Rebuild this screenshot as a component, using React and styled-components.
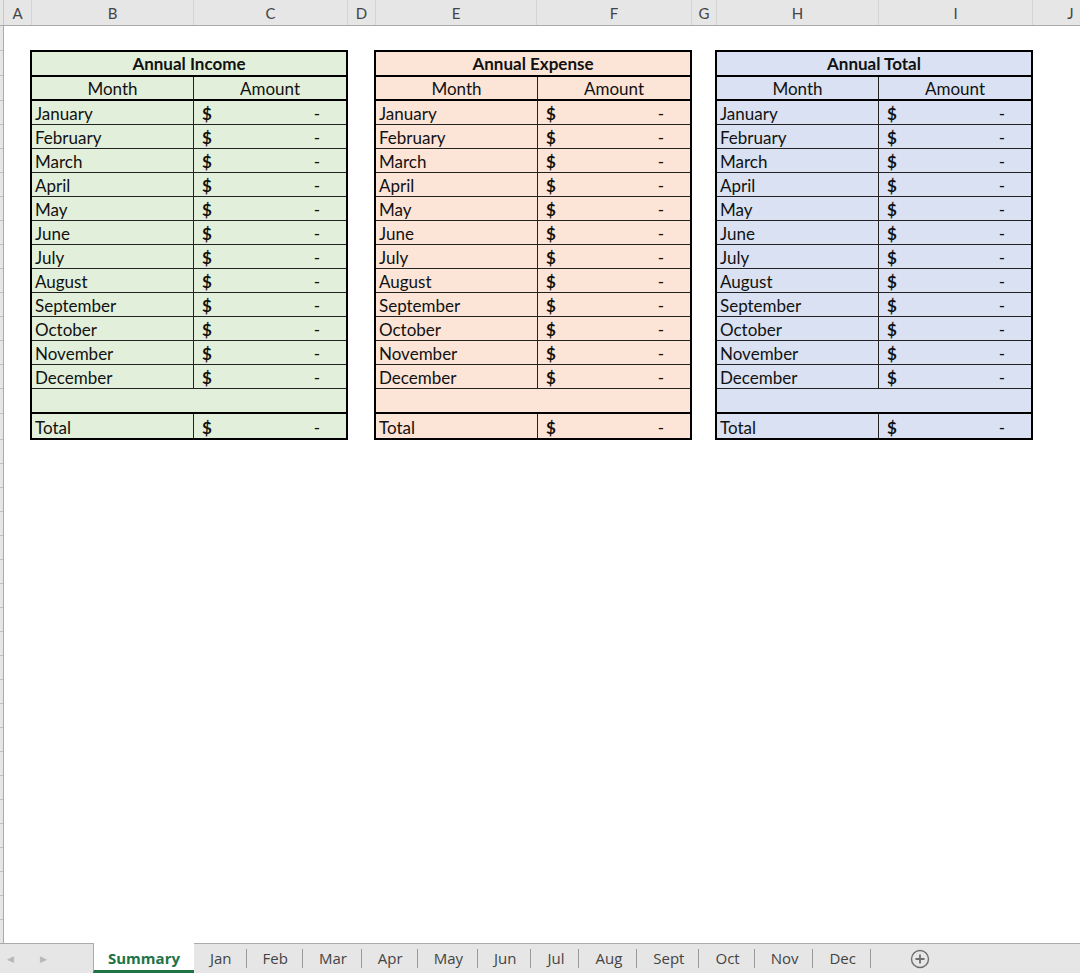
import React from "react";
import styled, { createGlobalStyle } from "styled-components";

const GlobalStyle = createGlobalStyle`
  html, body {
    margin: 0;
    padding: 0;
    background: #ffffff;
  }
  * {
    box-sizing: border-box;
  }
`;

const months = [
  "January",
  "February",
  "March",
  "April",
  "May",
  "June",
  "July",
  "August",
  "September",
  "October",
  "November",
  "December",
];

// column header letters with their widths in px
const columns = [
  { id: "A", w: 28 },
  { id: "B", w: 162 },
  { id: "C", w: 154 },
  { id: "D", w: 28 },
  { id: "E", w: 161 },
  { id: "F", w: 155 },
  { id: "G", w: 25 },
  { id: "H", w: 162 },
  { id: "I", w: 154 },
  { id: "J", w: 76 },
];

// sheet row heights, drawn in the narrow row header on the left
const rowHeights = [25, 25, 25, ...Array(12).fill(24), 25, 26, ...Array(21).fill(24)];

const sheets = ["Jan", "Feb", "Mar", "Apr", "May", "Jun", "Jul", "Aug", "Sept", "Oct", "Nov", "Dec"];

const tables = [
  { title: "Annual Income", bg: "#e2efda" },
  { title: "Annual Expense", bg: "#fce4d6" },
  { title: "Annual Total", bg: "#d9e1f2" },
];

const Window = styled.div`
  width: 1080px;
  height: 973px;
  display: flex;
  flex-direction: column;
  overflow: hidden;
  background: #fff;
`;

const ColumnBar = styled.div`
  height: 26px;
  display: flex;
  background: #e6e6e6;
  border-bottom: 1px solid #ababab;
  flex-shrink: 0;
  overflow: hidden;
`;

const Corner = styled.div`
  width: 4px;
  flex-shrink: 0;
  border-right: 1px solid #c8c8c8;
`;

const ColumnCell = styled.div`
  width: ${(p) => p.w}px;
  flex-shrink: 0;
  display: flex;
  align-items: center;
  justify-content: center;
  border-right: 1px solid #d4d4d4;
  font-family: Lato, "Liberation Sans", sans-serif;
  font-size: 15px;
  color: #444;
`;

const Body = styled.div`
  flex: 1;
  display: flex;
  min-height: 0;
`;

const RowHeader = styled.div`
  width: 4px;
  flex-shrink: 0;
  background: #e6e6e6;
  border-right: 1px solid #ababab;
  display: flex;
  flex-direction: column;
  overflow: hidden;
`;

const RowCell = styled.div`
  height: ${(p) => p.h}px;
  flex-shrink: 0;
  border-bottom: 1px solid #c2c2c2;
`;

const Sheet = styled.div`
  flex: 1;
  display: flex;
  align-items: flex-start;
  padding: 24px 0 0 26px;
  gap: 23px;
`;

const Table = styled.div`
  width: 318px;
  display: grid;
  grid-template-columns: 162px 1fr;
  background: ${(p) => p.bg};
  border: 2px solid #000;
  font-family: Lato, "Liberation Sans", sans-serif;
  font-size: 17px;
  color: #111;
  &:nth-child(2) {
    margin-left: 3px;
  }
`;

const Title = styled.div`
  grid-column: 1 / span 2;
  height: 25px;
  border-bottom: 2px solid #000;
  display: flex;
  align-items: center;
  justify-content: center;
  font-weight: 700;
  font-size: 17px;
`;

const HeadCell = styled.div`
  height: 24px;
  border-bottom: 2px solid #000;
  border-right: ${(p) => (p.first ? "1px solid #222" : "none")};
  display: flex;
  align-items: center;
  justify-content: center;
  padding-top: 1px;
`;

const Cell = styled.div`
  height: ${(p) => p.h || 24}px;
  border-bottom: ${(p) => (p.last ? "none" : "1px solid #222")};
  border-right: ${(p) => (p.first ? "1px solid #222" : "none")};
  display: flex;
  align-items: center;
  padding: 2px 0 0 3px;
`;

const Blank = styled.div`
  grid-column: 1 / span 2;
  height: 25px;
  border-bottom: 2px solid #000;
`;

const Amount = styled(Cell)`
  justify-content: space-between;
  padding: 2px 26px 0 8px;
`;

const Dollar = styled.span`
  font-weight: 700;
`;

const TabBar = styled.div`
  height: 30px;
  flex-shrink: 0;
  display: flex;
  align-items: stretch;
  background: #e6e6e6;
  border-top: 1px solid #ababab;
  font-family: "Open Sans", "Liberation Sans", sans-serif;
  font-size: 15px;
  color: #444;
`;

const Nav = styled.div`
  width: 93px;
  display: flex;
  align-items: center;
  gap: 26px;
  padding-left: 7px;
  color: #b8b8b8;
  font-size: 9px;
`;

const Tab = styled.div`
  display: flex;
  align-items: center;
  padding: ${(p) => (p.active ? "2px 14px 0 14px" : "2px 15px 0 16px")};
  position: relative;
  background: ${(p) => (p.active ? "#fff" : "transparent")};
  color: ${(p) => (p.active ? "#217346" : "#444")};
  font-weight: ${(p) => (p.active ? 700 : 400)};
  border-left: ${(p) => (p.active ? "1px solid #ababab" : "none")};
  border-bottom: ${(p) => (p.active ? "3px solid #217346" : "3px solid transparent")};
  margin-top: ${(p) => (p.active ? "-1px" : "0")};
  &::after {
    content: "";
    position: absolute;
    right: 0;
    top: 5px;
    bottom: 2px;
    width: 1px;
    background: ${(p) => (p.active ? "transparent" : "#9a9a9a")};
  }
`;

const AddSheet = styled.div`
  display: flex;
  align-items: center;
  padding-left: 39px;
  color: #777;
`;

const PlusIcon = () => (
  <svg width="20" height="20" viewBox="0 0 20 20" fill="none" stroke="#6f6f6f" strokeWidth="1.4">
    <circle cx="10" cy="10" r="8.5" />
    <path d="M10 5.5v9M5.5 10h9" strokeWidth="1.8" />
  </svg>
);

const SummaryTable = ({ title, bg }) => (
  <Table bg={bg}>
    <Title>{title}</Title>
    <HeadCell first>Month</HeadCell>
    <HeadCell>Amount</HeadCell>
    {months.map((m) => (
      <React.Fragment key={m}>
        <Cell first>{m}</Cell>
        <Amount>
          <Dollar>$</Dollar>
          <span>-</span>
        </Amount>
      </React.Fragment>
    ))}
    <Blank />
    <Cell first last h={24}>
      Total
    </Cell>
    <Amount last h={24}>
      <Dollar>$</Dollar>
      <span>-</span>
    </Amount>
  </Table>
);

export default function App() {
  return (
    <Window>
      <GlobalStyle />
      <ColumnBar>
        <Corner />
        {columns.map((c) => (
          <ColumnCell key={c.id} w={c.w}>
            {c.id}
          </ColumnCell>
        ))}
      </ColumnBar>
      <Body>
        <RowHeader>
          {rowHeights.map((h, i) => (
            <RowCell key={i} h={h} />
          ))}
        </RowHeader>
        <Sheet>
          {tables.map((t) => (
            <SummaryTable key={t.title} title={t.title} bg={t.bg} />
          ))}
        </Sheet>
      </Body>
      <TabBar>
        <Nav>
          <span>◀</span>
          <span>▶</span>
        </Nav>
        <Tab active>Summary</Tab>
        {sheets.map((s) => (
          <Tab key={s}>{s}</Tab>
        ))}
        <AddSheet>
          <PlusIcon />
        </AddSheet>
      </TabBar>
    </Window>
  );
}
